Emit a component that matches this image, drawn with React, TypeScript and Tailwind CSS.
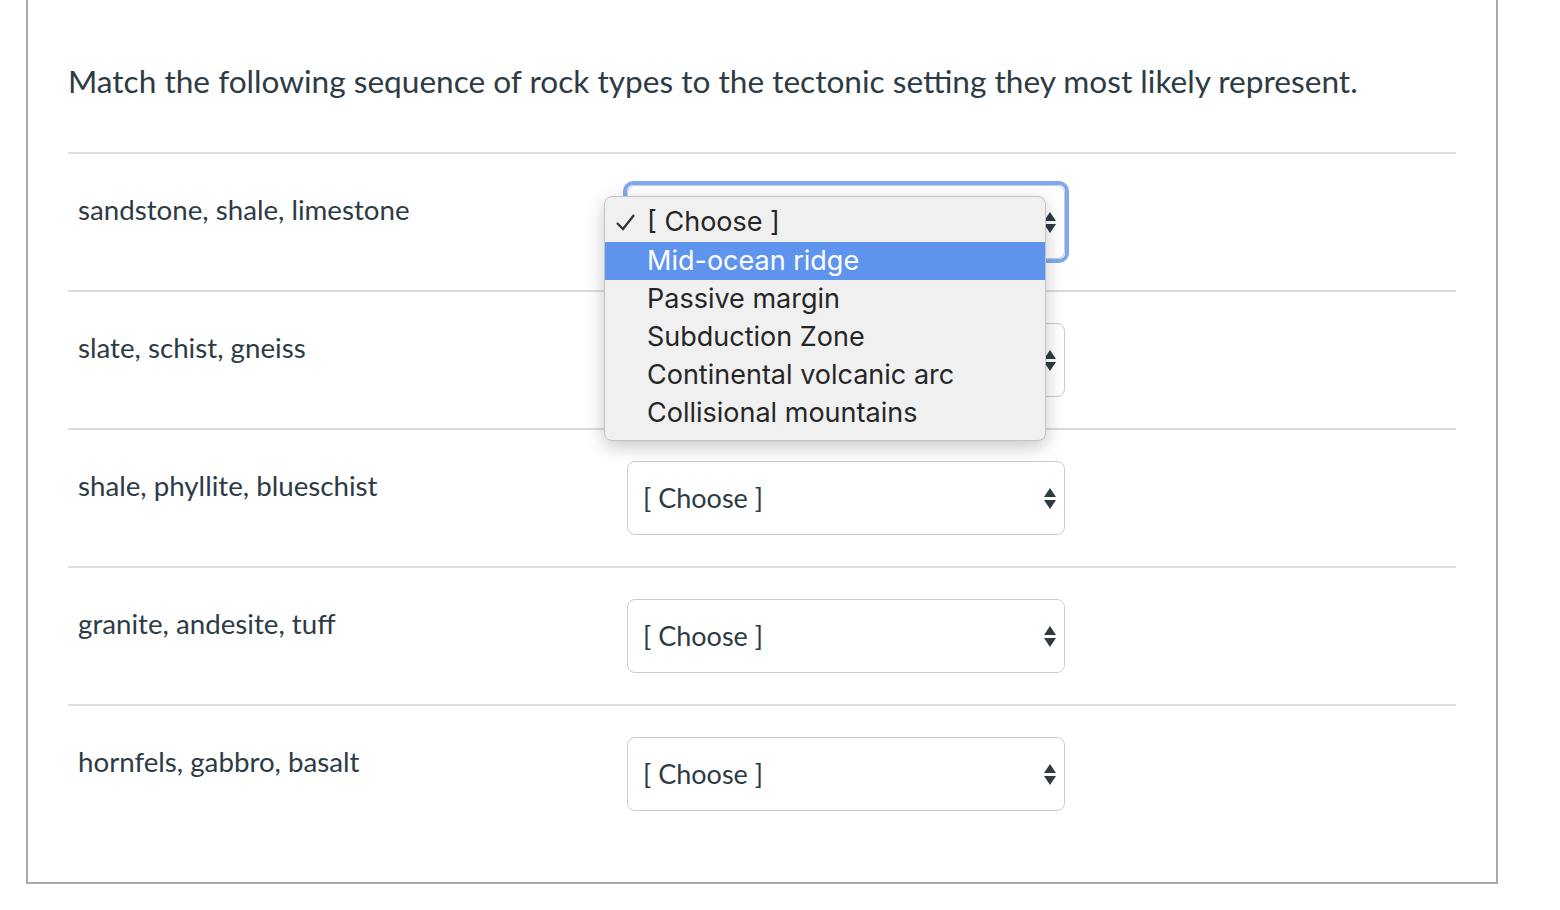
import React from 'react';

const rows = [
  'sandstone, shale, limestone',
  'slate, schist, gneiss',
  'shale, phyllite, blueschist',
  'granite, andesite, tuff',
  'hornfels, gabbro, basalt',
];

const options = [
  'Mid-ocean ridge',
  'Passive margin',
  'Subduction Zone',
  'Continental volcanic arc',
  'Collisional mountains',
];

const Arrows = () => (
  <svg width="14" height="23" viewBox="0 0 14 23" className="shrink-0">
    <path d="M7 1 L13 10 L1 10 Z" fill="#2d3b45" />
    <path d="M1 13 L13 13 L7 22 Z" fill="#2d3b45" />
  </svg>
);

const SelectBox = ({ focused }: { focused?: boolean }) => (
  <div
    className={
      focused
        ? 'rounded-[10px] border-4 border-[#7ea9f2] -m-[4px]'
        : ''
    }
  >
    <div className="flex items-center justify-between w-[438px] h-[74px] rounded-[8px] border border-[#c7cdd1] bg-white pl-[15px] pr-[7px]">
      <span className="text-[27px] text-[#2d3b45]">{focused ? '' : '[ Choose ]'}</span>
      <Arrows />
    </div>
  </div>
);

const Dropdown = () => (
  <div className="absolute left-[-23px] top-[42px] w-[442px] rounded-[8px] border border-[#c4c4c4] bg-[#f0f0f0] shadow-[0_6px_18px_rgba(0,0,0,0.22)] pt-[5px] pb-[8px] z-10 font-['Inter',sans-serif] text-[27px] text-[#262626]">
    <div className="flex items-center h-[40px] pl-[10px]">
      <svg width="22" height="20" viewBox="0 0 22 20" className="mr-[10px]">
        <path d="M2 11 L8 17 L19 3" stroke="#333" strokeWidth="2.2" fill="none" />
      </svg>
      <span>[ Choose ]</span>
    </div>
    {options.map((o, i) => (
      <div
        key={o}
        className={
          i === 0
            ? 'flex items-center h-[38px] pl-[42px] bg-[#5e94ee] text-white'
            : 'flex items-center h-[38px] pl-[42px]'
        }
      >
        {o}
      </div>
    ))}
  </div>
);

export default function App() {
  return (
    <div className="min-h-screen bg-white font-['Lato',sans-serif]">
      <div className="ml-[26px] w-[1472px] h-[884px] border-l-2 border-r-2 border-b-2 border-[#a8a8a8] px-[40px] pt-[62px]">
        <h1 className="text-[31.6px] leading-[38px] text-[#2d3b45] mb-[52px]">
          Match the following sequence of rock types to the tectonic setting they most likely represent.
        </h1>
        {rows.map((r, i) => (
          <div key={r} className="flex border-t-2 border-[#dcdcdc] h-[138px]">
            <div className="w-[559px] pl-[10px] pt-[38px] text-[27.7px] leading-[36px] text-[#2d3b45]">{r}</div>
            <div className="relative pt-[31px]">
              <SelectBox focused={i === 0} />
              {i === 0 && <Dropdown />}
            </div>
          </div>
        ))}
      </div>
    </div>
  );
}
